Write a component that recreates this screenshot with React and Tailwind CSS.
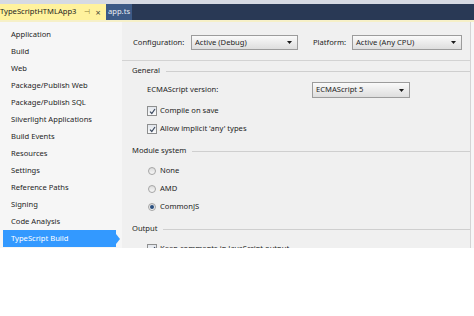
import React from "react";

function Caret() {
  return (
    <svg width="5" height="3" viewBox="0 0 5 3" className="shrink-0">
      <path d="M0 0 H5 L2.5 3 Z" fill="#1a1a1a" />
    </svg>
  );
}

function Select({ className, text }) {
  return (
    <div
      className={`flex items-center justify-between border border-[#9c9c9c] bg-linear-to-b from-[#fafafa] to-[#dedede] pl-[3px] pr-[5px] ${className}`}
    >
      <span className="leading-none">{text}</span>
      <Caret />
    </div>
  );
}

function Check({ label }) {
  return (
    <div className="flex h-[18px] items-center pl-[25px]">
      <div className="flex h-[10px] w-[10px] items-center justify-center border border-[#8e8f8f] bg-linear-to-b from-[#e2e6ec] to-[#fbfbfb]">
        <svg width="7" height="7" viewBox="0 0 7 7">
          <path d="M1 3.6 L2.8 5.5 L6 1" fill="none" stroke="#3c4a60" strokeWidth="1.2" />
        </svg>
      </div>
      <span className="ml-[3px]">{label}</span>
    </div>
  );
}

function Radio({ label, on }) {
  return (
    <div className="flex h-[18px] items-center pl-[26px]">
      <div className="flex h-[8px] w-[8px] items-center justify-center rounded-full border border-[#a5a5a5] bg-linear-to-b from-[#dcdcdc] to-[#f8f8f8]">
        {on && <div className="h-[4px] w-[4px] rounded-full bg-[#2a4f7f]" />}
      </div>
      <span className="ml-[4px]">{label}</span>
    </div>
  );
}

function Section({ label, className }) {
  return (
    <div className={`flex h-[12px] items-center pl-[10px] ${className}`}>
      <span>{label}</span>
      <div className="ml-[6px] h-px flex-1 bg-[#cfcfcf]" />
    </div>
  );
}

const items = [
  "Application",
  "Build",
  "Web",
  "Package/Publish Web",
  "Package/Publish SQL",
  "Silverlight Applications",
  "Build Events",
  "Resources",
  "Settings",
  "Reference Paths",
  "Signing",
  "Code Analysis",
];

export default function App() {
  return (
    <div className="h-[316px] w-[474px] overflow-hidden bg-white font-['Noto_Sans',sans-serif] text-[7.6px] text-[#1e1e1e]">
      <div className="h-[4px] bg-[#d6dae3]" />
      <div className="flex h-[16px] items-stretch bg-[#293955]">
        <div className="flex w-[106px] items-center bg-[#fff29d] text-[#1e1e1e]">
          <span>TypeScriptHTMLApp3</span>
          <span className="ml-[8px] text-[7px] text-[#8a7f3a]">⊣</span>
          <span className="ml-[5px] text-[9px] leading-none text-[#4a4a3a]">×</span>
        </div>
        <div className="flex items-center bg-[#3c5a86] px-[2px] text-[#e8edf5]">app.ts</div>
      </div>
      <div className="h-[2px] bg-[#f6f0c8]" />
      <div className="flex h-[226px]">
        <div className="w-[122px] bg-[#f6f6f6] pt-[4px]">
          {items.map((t) => (
            <div key={t} className="flex h-[17px] items-center pl-[11px]">
              {t}
            </div>
          ))}
          <div className="flex h-[17px] items-stretch pl-[3px]">
            <div className="flex w-[113px] items-center bg-[#3399ff] pl-[8px] text-white">
              TypeScript Build
            </div>
            <div className="self-center h-0 w-0 border-y-[5px] border-l-[4px] border-y-transparent border-l-[#3399ff]" />
          </div>
        </div>
        <div className="flex-1 overflow-hidden border-r border-[#d4d4d4] bg-[#f0f0f0]">
          <div className="mt-[13px] flex h-[15px] items-center pl-[11px]">
            <span className="w-[58px]">Configuration:</span>
            <Select className="h-[15px] w-[107px]" text="Active (Debug)" />
            <span className="ml-[15px] w-[39px]">Platform:</span>
            <Select className="h-[15px] w-[110px]" text="Active (Any CPU)" />
          </div>
          <div className="mt-[10px] h-px bg-[#d3d3d3]" />
          <Section label="General" className="mt-[4px]" />
          <div className="mt-[5px] flex h-[16px] items-center pl-[25px]">
            <span className="w-[165px]">ECMAScript version:</span>
            <Select className="h-[16px] w-[98px]" text="ECMAScript 5" />
          </div>
          <div className="mt-[4px]">
            <Check label="Compile on save" />
            <Check label="Allow implicit 'any' types" />
          </div>
          <Section label="Module system" className="mt-[7px]" />
          <div className="mt-[5px]">
            <Radio label="None" />
            <Radio label="AMD" />
            <Radio label="CommonJS" on />
          </div>
          <Section label="Output" className="mt-[7px]" />
          <div className="mt-[5px]">
            <Check label="Keep comments in JavaScript output" />
          </div>
        </div>
        <div className="w-[3px] bg-[#f7f7f7]" />
      </div>
    </div>
  );
}
